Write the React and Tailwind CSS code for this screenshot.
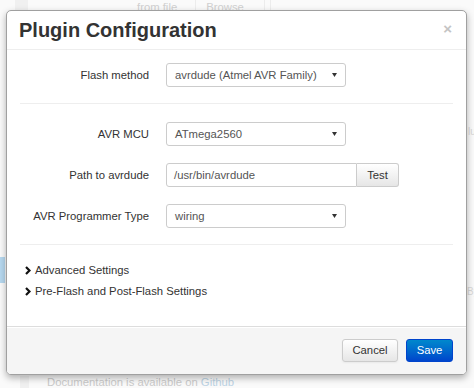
import React from "react";

function Caret() {
  return (
    <svg width="5" height="4" viewBox="0 0 5 4" className="shrink-0 mr-[1px]">
      <path d="M0 0h5L2.5 4z" fill="#333" />
    </svg>
  );
}

function Select({ value }) {
  return (
    <div className="flex items-center justify-between w-[180px] h-[24px] pl-[8px] pr-[7px] bg-white border border-[#cccccc] rounded-[3px] text-[#555]">
      <span>{value}</span>
      <Caret />
    </div>
  );
}

function Row({ label, children }) {
  return (
    <div className="flex items-center gap-[17px]">
      <div className="w-[129px] text-right text-[#333]">{label}</div>
      {children}
    </div>
  );
}

function Chevron() {
  return (
    <svg width="6" height="9" viewBox="0 0 6 9" className="shrink-0">
      <path d="M1 1l3.5 3.5L1 8" stroke="#111" strokeWidth="2.2" fill="none" />
    </svg>
  );
}

export default function App() {
  return (
    <div
      className="relative w-[474px] h-[388px] bg-[#fafafa] overflow-hidden text-[11.3px]"
      style={{ fontFamily: '"Liberation Sans", Arial, sans-serif' }}
    >
      {/* Page behind the dialog */}
      <div className="absolute top-0 left-0 right-0 h-[10px] flex items-end">
        <div className="ml-[15px] w-[13px] h-[10px] bg-[#f0f0f0]"></div>
        <div className="ml-[109px] h-[10px] text-[#d0d0d0] leading-[14px]">from file</div>
        <div className="ml-[18px] w-px h-[10px] bg-[#ececec]"></div>
        <div className="ml-[10px] h-[10px] text-[#d0d0d0] leading-[14px]">Browse</div>
        <div className="ml-[20px] w-px h-[10px] bg-[#ececec]"></div>
        <div className="ml-[5px] w-px h-[10px] bg-[#ececec]"></div>
      </div>
      <div className="absolute left-0 top-[257px] w-[5px] h-[26px] bg-[#b6d8ef]"></div>
      <div className="absolute left-[468px] top-[124px] text-[#d8d8d8] text-[10px]">lu</div>
      <div className="absolute left-[467px] top-[284px] text-[#d8d8d8] text-[10px]">By</div>
      <div className="absolute left-[20px] top-[376px] w-[9px] h-[12px] bg-[#f0f0f0]"></div>
      <div className="absolute left-[47px] top-[374px] text-[#cacaca]">
        Documentation is available on <span className="text-[#bcd3e4]">Github</span>
      </div>

      {/* Dialog */}
      <div className="absolute left-[6px] top-[10px] w-[461px] h-[365px] flex flex-col bg-white border border-[#a0a0a0] rounded-[5px] shadow-[0_3px_7px_rgba(0,0,0,0.3)] overflow-hidden">
        <div className="flex items-center justify-between h-[39px] pl-[12px] pr-[14px] border-b border-[#eeeeee]">
          <h3 className="text-[20px] font-bold text-[#333] leading-none">Plugin Configuration</h3>
          <span className="text-[15px] font-bold text-[#c4c4c4] leading-none mb-[4px]">×</span>
        </div>

        <div className="flex-1 flex flex-col px-[13px] pt-[13px]">
          <Row label="Flash method">
            <Select value="avrdude (Atmel AVR Family)" />
          </Row>
          <div className="h-px bg-[#eeeeee] mt-[16px] mb-[18px]"></div>
          <div className="flex flex-col gap-[17px]">
            <Row label="AVR MCU">
              <Select value="ATmega2560" />
            </Row>
            <Row label="Path to avrdude">
              <div className="flex h-[24px]">
                <div className="w-[191px] flex items-center pl-[7px] border border-[#cccccc] rounded-l-[3px] text-[#555]">
                  /usr/bin/avrdude
                </div>
                <div className="w-[42px] flex items-center justify-center border border-l-0 border-[#cccccc] rounded-r-[3px] bg-gradient-to-b from-white to-[#e6e6e6] text-[#333]">
                  Test
                </div>
              </div>
            </Row>
            <Row label="AVR Programmer Type">
              <Select value="wiring" />
            </Row>
          </div>
          <div className="h-px bg-[#eeeeee] mt-[16px] mb-[15px]"></div>
          <div className="flex flex-col pl-[5px] text-[#333]">
            <div className="flex items-center gap-[4px] h-[21px]">
              <Chevron />
              <span>Advanced Settings</span>
            </div>
            <div className="flex items-center gap-[4px] h-[21px]">
              <Chevron />
              <span>Pre-Flash and Post-Flash Settings</span>
            </div>
          </div>
        </div>

        <div className="h-[48px] flex items-start justify-end gap-[8px] pt-[12px] pr-[13px] bg-[#f5f5f5] border-t border-[#dddddd] shadow-[inset_0_1px_0_#fff]">
          <div className="w-[56px] h-[23px] flex items-center justify-center border border-[#cccccc] rounded-[3px] bg-gradient-to-b from-white to-[#e6e6e6] text-[#333] shadow-[0_1px_2px_rgba(0,0,0,0.05)]">
            Cancel
          </div>
          <div className="w-[47px] h-[23px] flex items-center justify-center border border-[#0044cc] rounded-[3px] bg-gradient-to-b from-[#0088cc] to-[#0044cc] text-white">
            Save
          </div>
        </div>
      </div>
    </div>
  );
}
